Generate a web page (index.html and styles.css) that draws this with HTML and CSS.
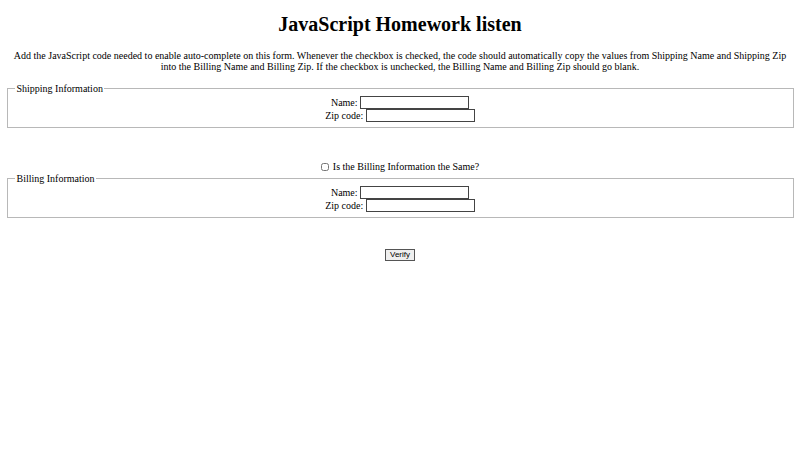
FILE: index.html
```html
<!DOCTYPE html>
<html>
<head>
<meta charset="utf-8">
<title>JavaScript Homework</title>
<link rel="stylesheet" href="styles.css">
</head>
<body>
<h1 class="title">JavaScript Homework listen</h1>
<p class="intro">Add the JavaScript code needed to enable auto-complete on this form. Whenever the checkbox is checked, the code should automatically copy the values from Shipping Name and Shipping Zip into the Billing Name and Billing Zip. If the checkbox is unchecked, the Billing Name and Billing Zip should go blank.</p>
<form class="form">
  <fieldset class="group">
    <legend class="legend">Shipping Information</legend>
    <div class="row"><label class="label" for="shippingName">Name:</label> <input class="field" type="text" id="shippingName"></div>
    <div class="row"><label class="label" for="shippingZip">Zip code:</label> <input class="field" type="text" id="shippingZip"></div>
  </fieldset>
  <div class="same">
    <input class="check" type="checkbox" id="same"> <label for="same">Is the Billing Information the Same?</label>
  </div>
  <fieldset class="group">
    <legend class="legend">Billing Information</legend>
    <div class="row"><label class="label" for="billingName">Name:</label> <input class="field" type="text" id="billingName"></div>
    <div class="row"><label class="label" for="billingZip">Zip code:</label> <input class="field" type="text" id="billingZip"></div>
  </fieldset>
  <div class="actions"><button class="verify" type="button">Verify</button></div>
</form>
</body>
</html>
```
FILE: styles.css
```css
html, body {
  background: #ffffff;
}
body {
  margin: 5px;
  font-family: "Liberation Serif", "Times New Roman", serif;
  font-size: 10px;
  color: #000;
}
.title {
  font-size: 20px;
  font-weight: bold;
  text-align: center;
  margin: 8.4px 0 13.4px;
  line-height: 23px;
}
.intro {
  text-align: center;
  margin: 0 0 10px;
  line-height: 11.5px;
}
.form {
  margin: 0;
}
.group {
  margin: 0 1.5px;
  padding: 1px 7.5px 5px;
  border: 1px solid #b8b8b8;
  text-align: center;
}
.legend {
  text-align: left;
  padding: 0 1.5px;
  line-height: 11.5px;
}
.row {
  display: flex;
  justify-content: center;
  align-items: center;
  height: 13.5px;
}
.label {
  margin-right: 2.5px;
}
.field {
  box-sizing: border-box;
  width: 109px;
  height: 13px;
  margin: 0;
  padding: 0 2px;
  border: 1px solid #444;
  border-radius: 0;
  font-size: 8px;
  background: #fff;
}
.same {
  margin-top: 33px;
  text-align: center;
  line-height: 11.5px;
  display: flex;
  justify-content: center;
  align-items: center;
}
.check {
  width: 8px;
  height: 8px;
  margin: 0 4px 0 0;
}
.actions {
  text-align: center;
  margin-top: 30px;
}
.verify {
  box-sizing: border-box;
  width: 30px;
  height: 12px;
  padding: 0;
  margin: 0;
  font-family: "Liberation Sans", Arial, sans-serif;
  font-size: 8px;
  line-height: 10px;
  color: #000;
  background: #efefef;
  border: 1px solid #555;
  border-radius: 0;
}
```
